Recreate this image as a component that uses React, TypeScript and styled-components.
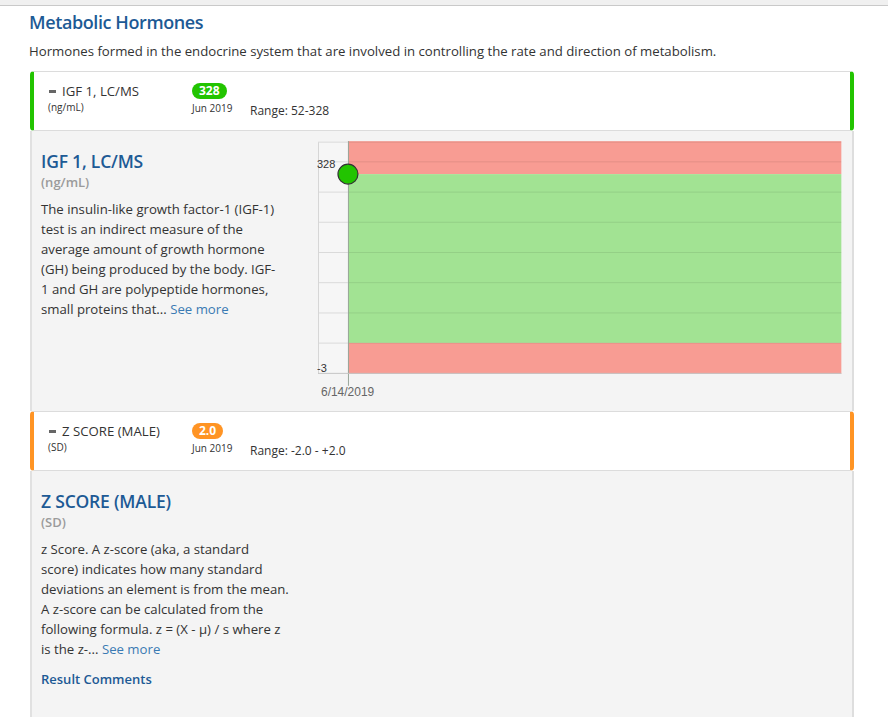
import React from "react";
import styled, { createGlobalStyle } from "styled-components";

const GlobalStyle = createGlobalStyle`
  html, body { margin: 0; padding: 0; background: #fff; }
  body { font-family: "Open Sans", "Noto Sans", sans-serif; color: #333; }
`;

const TopBar = styled.div`
  height: 5px;
  background: #f0f0f0;
  border-bottom: 1px solid #c9c9c9;
`;

const Section = styled.section`
  width: 825px;
  margin-left: 29px;
  padding-top: 2px;
`;

const Title = styled.h2`
  margin: 0;
  font-size: 18px;
  letter-spacing: -0.4px;
  line-height: 28px;
  font-weight: 600;
  color: #1d5a95;
`;

const Lead = styled.p`
  margin: 6px 0 11px;
  font-size: 13.2px;
  line-height: 18px;
  color: #333;
`;

const Result = styled.div`
  margin-left: 1px;
`;

const Header = styled.div<{ $tone: string }>`
  display: flex;
  height: 60px;
  box-sizing: border-box;
  padding: 10px 14px 0 14px;
  background: #fff;
  border: 1px solid #dcdcdc;
  border-left: 4px solid ${(p) => p.$tone};
  border-right: 4px solid ${(p) => p.$tone};
  border-radius: 4px;
`;

const NameCol = styled.div`
  width: 144px;
  display: flex;
  flex-direction: column;
`;

const Name = styled.div`
  font-size: 13.2px;
  line-height: 18px;
  color: #333;
  display: flex;
  align-items: center;
`;

const Dash = styled.span`
  display: inline-block;
  width: 7px;
  height: 3px;
  background: #666;
  margin: 0 6px 0 1px;
`;

const Small = styled.div`
  font-size: 10px;
  line-height: 14px;
  color: #333;
`;

const ValueCol = styled.div`
  width: 58px;
  display: flex;
  flex-direction: column;
  align-items: flex-start;
`;

const Badge = styled.span<{ $tone: string }>`
  display: inline-block;
  height: 16px;
  line-height: 16px;
  padding: 0 7px;
  border-radius: 9px;
  background: ${(p) => p.$tone};
  color: #fff;
  font-size: 12px;
  font-weight: 700;
  margin: 1px 0 2px;
`;

const Range = styled.div`
  font-size: 12px;
  line-height: 16px;
  color: #333;
  margin-top: 21px;
`;

const Panel = styled.div<{ $pad: number }>`
  display: flex;
  gap: 20px;
  padding: 10px 10px ${(p) => p.$pad}px 9px;
  background: #f4f4f4;
  border-left: 2px solid #e1e1e1;
  border-right: 2px solid #dedede;
`;

const Info = styled.div`
  width: 256px;
  padding-top: 8px;
`;

const InfoTitle = styled.h3`
  margin: 0;
  font-size: 17.5px;
  letter-spacing: -0.2px;
  line-height: 24px;
  font-weight: 600;
  color: #1d5a95;
`;

const InfoUnit = styled.div`
  font-size: 13px;
  line-height: 18px;
  font-weight: 600;
  color: #9b9b9b;
`;

const InfoText = styled.p<{ $measure: number }>`
  width: ${(p) => p.$measure}px;
  margin: 8px 0 0;
  font-size: 13.2px;
  line-height: 20px;
  color: #333;
`;

const More = styled.a`
  color: #3a7ab3;
  text-decoration: none;
`;

const Comments = styled.div`
  margin-top: 10px;
  font-size: 13px;
  line-height: 20px;
  font-weight: 600;
  color: #1d5a95;
`;

const gridYs = [1, 20.7, 51, 81.2, 111.5, 141.7, 172, 202.2];

function TrendChart() {
  return (
    <svg width="526" height="260" viewBox="0 0 526 260" style={{ display: "block" }}>
      <rect x="1" y="1" width="30" height="232" fill="#f6f6f6" />
      <rect x="31" y="0" width="494" height="33" fill="#f89c93" />
      <rect x="31" y="33" width="494" height="169" fill="#a2e393" />
      <rect x="31" y="202" width="494" height="31" fill="#f89c93" />
      {gridYs.map((y) => (
        <g key={y}>
          <line x1="1" x2="31" y1={y} y2={y} stroke="#dadada" />
          <line x1="31" x2="525" y1={y} y2={y} stroke="rgba(0,0,0,0.09)" />
        </g>
      ))}
      <line x1="1.5" x2="1.5" y1="1" y2="233" stroke="#d6d6d6" />
      <line x1="31.5" x2="31.5" y1="0" y2="245" stroke="#9aa79a" />
      <line x1="1" x2="525" y1="232.5" y2="232.5" stroke="#c4c4c4" />
      <circle cx="31" cy="33" r="10" fill="#22c400" stroke="#333" strokeWidth="1.2" />
      <text x="0" y="27" fontFamily="Liberation Sans, Arial, sans-serif" fontSize="11" fill="#333">328</text>
      <text x="0" y="231" fontFamily="Liberation Sans, Arial, sans-serif" fontSize="11" fill="#333">-3</text>
      <text x="4" y="255" fontFamily="Liberation Sans, Arial, sans-serif" fontSize="12" fill="#666">6/14/2019</text>
    </svg>
  );
}

export default function App() {
  return (
    <>
      <GlobalStyle />
      <TopBar />
      <Section>
        <Title>Metabolic Hormones</Title>
        <Lead>
          Hormones formed in the endocrine system that are involved in controlling the rate and direction of
          metabolism.
        </Lead>

        <Result>
          <Header $tone="#22c400">
            <NameCol>
              <Name>
                <Dash />
                IGF 1, LC/MS
              </Name>
              <Small>(ng/mL)</Small>
            </NameCol>
            <ValueCol>
              <Badge $tone="#22c400">328</Badge>
              <Small>Jun 2019</Small>
            </ValueCol>
            <Range>Range: 52-328</Range>
          </Header>
          <Panel $pad={10}>
            <Info>
              <InfoTitle>IGF 1, LC/MS</InfoTitle>
              <InfoUnit>(ng/mL)</InfoUnit>
              <InfoText $measure={240}>
                The insulin-like growth factor-1 (IGF-1) test is an indirect measure of the average amount of growth
                hormone (GH) being produced by the body. IGF-1 and GH are polypeptide hormones, small proteins
                that... <More href="#">See more</More>
              </InfoText>
            </Info>
            <TrendChart />
          </Panel>
        </Result>

        <Result>
          <Header $tone="#ff9424">
            <NameCol>
              <Name>
                <Dash />
                Z SCORE (MALE)
              </Name>
              <Small>(SD)</Small>
            </NameCol>
            <ValueCol>
              <Badge $tone="#ff9424">2.0</Badge>
              <Small>Jun 2019</Small>
            </ValueCol>
            <Range>Range: -2.0 - +2.0</Range>
          </Header>
          <Panel $pad={40}>
            <Info>
              <InfoTitle>Z SCORE (MALE)</InfoTitle>
              <InfoUnit>(SD)</InfoUnit>
              <InfoText $measure={248.5}>
                z Score. A z-score (aka, a standard score) indicates how many standard deviations an element is from
                the mean. A z-score can be calculated from the following formula. z = (X - μ) / s where z is the
                z-... <More href="#">See more</More>
              </InfoText>
              <Comments>Result Comments</Comments>
            </Info>
          </Panel>
        </Result>
      </Section>
    </>
  );
}
